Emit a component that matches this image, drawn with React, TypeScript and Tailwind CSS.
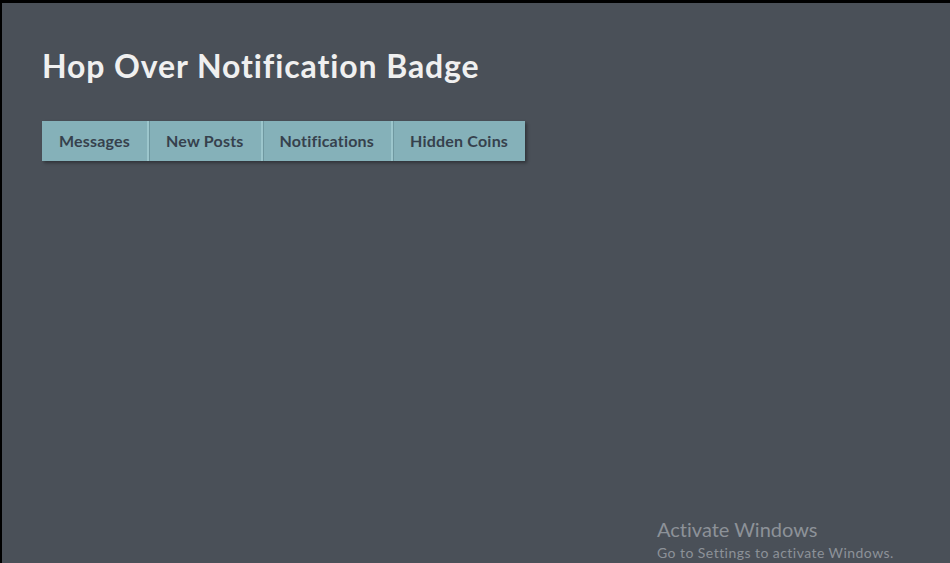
const tabs = ['Messages', 'New Posts', 'Notifications', 'Hidden Coins']

export default function App() {
  return (
    <div
      className="relative h-[563px] w-[950px] overflow-hidden border-l-2 border-t-[3px] border-black bg-[#4a5058] [font-variant-ligatures:none]"
      style={{ fontFamily: 'Lato, "Open Sans", sans-serif' }}
    >
      <div className="px-10 pt-[41px]">
        <h1 className="text-[32px] font-bold leading-[44px] tracking-[0.9px] text-[#f0f0f0]">
          Hop Over Notification Badge
        </h1>
        <div className="mt-[33px] flex w-max shadow-[2px_2px_3px_rgba(0,0,0,0.35)]">
          {tabs.map((t, i) => (
            <div
              key={t}
              className={
                'flex h-10 items-center bg-[#85b1b9] px-[17px] text-[16px] font-bold tracking-[0.2px] text-[#36414d] ' +
                (i > 0 ? 'border-l-2 border-l-[#9cc6cc] shadow-[inset_1px_0_0_#6f98a0]' : '')
              }
            >
              {t}
            </div>
          ))}
        </div>
      </div>

      <div className="absolute left-[655px] top-[513px] text-[#8d9298]">
        <div className="text-[20px] leading-[26px]">Activate Windows</div>
        <div className="text-[14px] leading-[22px] tracking-[0.45px]">Go to Settings to activate Windows.</div>
      </div>
    </div>
  )
}
